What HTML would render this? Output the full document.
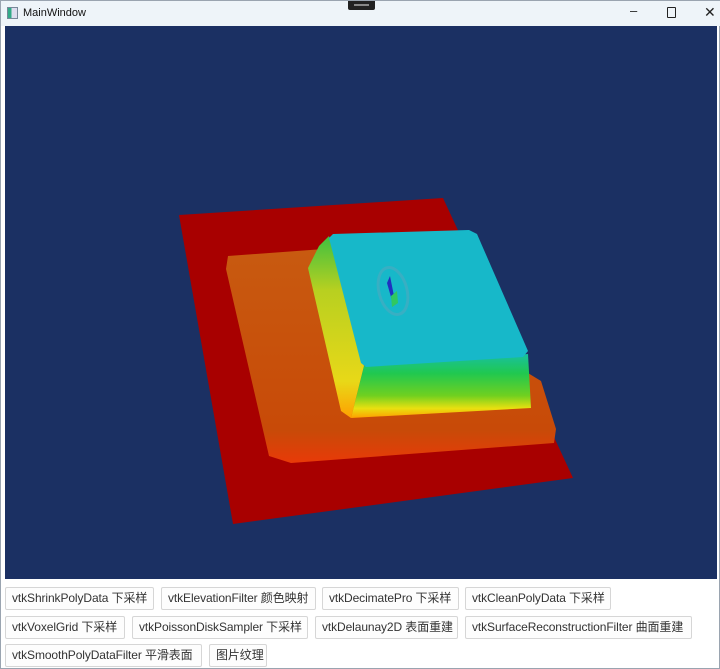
<!DOCTYPE html>
<html><head><meta charset="utf-8"><style>
*{margin:0;padding:0;box-sizing:border-box}
body{width:720px;height:669px;background:#fff;font-family:"Liberation Sans","Noto Sans CJK SC",sans-serif;position:relative;overflow:hidden;border:1px solid #9aa4b0}
#title{position:absolute;left:0;top:0;width:720px;height:25px;background:#eef4f9}
#title .t{position:absolute;left:22px;top:6px;font-size:11px;color:#111}
#title .ic{position:absolute;left:6px;top:6px;width:11px;height:12px;border:1px solid #789;background:linear-gradient(90deg,#3a8 0 40%,#dde 40%)}
#title .bar{position:absolute;left:347px;top:0;width:27px;height:9px;background:#222;border-radius:0 0 2px 2px}
#title .bar:after{content:"";position:absolute;left:6px;top:3px;width:15px;height:2px;background:#888}
.wb{position:absolute;top:4px;font-size:13px;color:#222}
#vp{position:absolute;left:4px;top:25px;width:712px;height:553px;background:#1b3063;overflow:hidden}
.b{position:absolute;height:23px;border:1px solid #d6d6d6;border-radius:2px;background:#fdfdfd;font-size:12px;letter-spacing:-0.1px;color:#333;line-height:21px;padding-left:6px;white-space:nowrap;overflow:hidden}
</style></head><body>
<div id="title"><div class="ic"></div><div class="t">MainWindow</div><div class="bar"></div>
<div class="wb" style="left:629px;top:2px">–</div>
<div style="position:absolute;left:666px;top:6px;width:9px;height:11px;border:1px solid #222;border-radius:1px"></div>
<div class="wb" style="left:703px;top:3px;font-size:14px">✕</div></div>
<div id="vp">
<svg width="712" height="553" viewBox="4 25 712 553">
<defs>
<linearGradient id="side" x1="0" y1="0" x2="0" y2="1">
<stop offset="0" stop-color="#18c0a0"/><stop offset="0.3" stop-color="#20c850"/><stop offset="0.65" stop-color="#70d020"/><stop offset="0.85" stop-color="#e8e010"/><stop offset="1" stop-color="#ffa000"/></linearGradient>
<linearGradient id="lside" x1="0" y1="0" x2="0" y2="1">
<stop offset="0" stop-color="#40c040"/><stop offset="0.3" stop-color="#b8d020"/><stop offset="0.8" stop-color="#e8d818"/><stop offset="1" stop-color="#ffa000"/></linearGradient>
<linearGradient id="or" x1="0" y1="0" x2="0" y2="1">
<stop offset="0" stop-color="#c85a10"/><stop offset="0.85" stop-color="#c84a08"/><stop offset="1" stop-color="#e83a08"/></linearGradient>
</defs>
<polygon points="178,214 442,197 572,477 232,523" fill="#a80000"/>
<polygon points="227,255 323,248 540,380 555,428 553,442 290,462 268,455 225,268" fill="url(#or)"/>
<polygon points="328,235 318,245 307,267 340,410 350,417 363,365" fill="url(#lside)"/>
<polygon points="363,365 527,353 530,407 350,417" fill="url(#side)"/>
<polygon points="328,237 332,233 468,229 476,233 527,350 522,356 365,366 360,362" fill="#17b8c9"/>
<ellipse cx="392" cy="290" rx="14" ry="24" transform="rotate(-15 392 290)" fill="none" stroke="#4fa8c0" stroke-width="3" opacity="0.6"/>
<polygon points="386,282 389,275 393,295 392,303" fill="#2030c0"/>
<polygon points="390,295 396,290 397,302 391,306" fill="#30c860"/>
</svg></div>
<div class="b" style="left:4px;top:586px;width:149px">vtkShrinkPolyData 下采样</div>
<div class="b" style="left:160px;top:586px;width:155px">vtkElevationFilter 颜色映射</div>
<div class="b" style="left:321px;top:586px;width:137px">vtkDecimatePro 下采样</div>
<div class="b" style="left:464px;top:586px;width:146px">vtkCleanPolyData 下采样</div>
<div class="b" style="left:4px;top:615px;width:120px">vtkVoxelGrid 下采样</div>
<div class="b" style="left:131px;top:615px;width:176px">vtkPoissonDiskSampler 下采样</div>
<div class="b" style="left:314px;top:615px;width:143px">vtkDelaunay2D 表面重建</div>
<div class="b" style="left:464px;top:615px;width:227px">vtkSurfaceReconstructionFilter 曲面重建</div>
<div class="b" style="left:4px;top:643px;width:197px">vtkSmoothPolyDataFilter 平滑表面</div>
<div class="b" style="left:208px;top:643px;width:58px">图片纹理</div>
</body></html>
